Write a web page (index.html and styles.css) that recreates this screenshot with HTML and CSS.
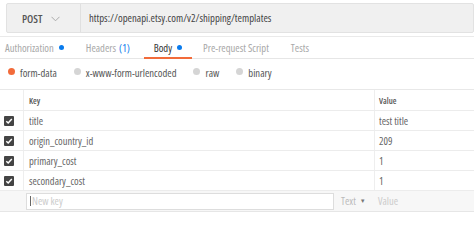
FILE: index.html
```html
<!DOCTYPE html>
<html>
<head>
<meta charset="utf-8">
<link rel="stylesheet" href="styles.css">
</head>
<body>
<div class="page">
  <div class="urlbar">
    <div class="method">POST <svg class="chev" width="9" height="6" viewBox="0 0 9 6"><path d="M0.5 0.8 L4.5 4.8 L8.5 0.8" fill="none" stroke="#aaa" stroke-width="1"/></svg></div>
    <div class="url">https://openapi.etsy.com/v2/shipping/templates</div>
  </div>
  <div class="tabs">
    <div class="tab">Authorization <span class="dot"></span></div>
    <div class="tab">Headers <span class="count">(1)</span></div>
    <div class="tab active">Body <span class="dot"></span></div>
    <div class="tab">Pre-request Script</div>
    <div class="tab">Tests</div>
  </div>
  <div class="modes">
    <div class="mode"><span class="radio on"></span>form-data</div>
    <div class="mode"><span class="radio"></span>x-www-form-urlencoded</div>
    <div class="mode"><span class="radio"></span>raw</div>
    <div class="mode"><span class="radio"></span>binary</div>
  </div>
  <div class="table">
    <div class="row head">
      <div class="c0"></div>
      <div class="c1">Key</div>
      <div class="c2">Value</div>
    </div>
    <div class="row">
      <div class="c0"><span class="cb"><svg width="8" height="8" viewBox="0 0 8 8"><path d="M1.3 4.2 L3.2 6 L6.8 2" fill="none" stroke="#fff" stroke-width="1.5"/></svg></span></div>
      <div class="c1">title</div>
      <div class="c2">test title</div>
    </div>
    <div class="row">
      <div class="c0"><span class="cb"><svg width="8" height="8" viewBox="0 0 8 8"><path d="M1.3 4.2 L3.2 6 L6.8 2" fill="none" stroke="#fff" stroke-width="1.5"/></svg></span></div>
      <div class="c1">origin_country_id</div>
      <div class="c2">209</div>
    </div>
    <div class="row">
      <div class="c0"><span class="cb"><svg width="8" height="8" viewBox="0 0 8 8"><path d="M1.3 4.2 L3.2 6 L6.8 2" fill="none" stroke="#fff" stroke-width="1.5"/></svg></span></div>
      <div class="c1">primary_cost</div>
      <div class="c2">1</div>
    </div>
    <div class="row">
      <div class="c0"><span class="cb"><svg width="8" height="8" viewBox="0 0 8 8"><path d="M1.3 4.2 L3.2 6 L6.8 2" fill="none" stroke="#fff" stroke-width="1.5"/></svg></span></div>
      <div class="c1">secondary_cost</div>
      <div class="c2">1</div>
    </div>
    <div class="row new">
      <div class="c0"></div>
      <div class="c1 newcell"><div class="input"><span class="caret"></span>New key</div><div class="type">Text <span class="tri">▼</span></div></div>
      <div class="c2 ph">Value</div>
    </div>
  </div>
</div>
</body>
</html>
```
FILE: styles.css
```css
* { box-sizing: border-box; }
html, body { margin: 0; padding: 0; background: #fff; }
body { font-family: "Open Sans", "Liberation Sans", sans-serif; font-stretch: 85%; color: #666; width: 474px; height: 220px; overflow: hidden; }
.page { padding-top: 3px; }
.urlbar {
  display: flex; align-items: stretch; height: 30px;
  background: #f0f0f0; border: 1px solid #e2e2e2; border-radius: 2px;
  margin: 0 0 0 6px; width: 468px;
}
.method {
  width: 74px; display: flex; align-items: center; padding-left: 15px; gap: 9px;
  font-size: 11px; font-weight: 600; color: #555; border-right: 1px solid #e0e0e0;
}
.chev { margin-top: 1px; }
.url { display: flex; align-items: center; padding-left: 8px; font-size: 10.7px; color: #444; }
.tabs {
  display: flex; height: 23px; margin-top: 3px; border-top: 1px solid #eaeaea; border-bottom: 1px solid #e6e6e6;
  padding-left: 5px; gap: 0;
}
.tab { display: flex; align-items: center; font-size: 10.6px; color: #a8a8a8; padding-right: 22px; position: relative; height: 100%; }
.tab .dot { display: inline-block; width: 5px; height: 5px; border-radius: 50%; background: #097bed; margin-left: 5px; }
.tab .count { color: #097bed; margin-left: 3px; }
.tab.active { color: #333; margin-left: -8px; padding-left: 10px; padding-right: 10px; margin-right: 11px; }
.tab.active::after { content: ""; position: absolute; left: 0; right: 0; bottom: -1px; height: 2px; background: #f26b3a; }
.modes { display: flex; height: 28px; align-items: center; padding-left: 8px; }
.mode { display: flex; align-items: center; font-size: 10.6px; color: #555; margin-right: 17px; }
.radio { width: 7px; height: 7px; border-radius: 50%; background: #d5d5d5; margin-right: 5px; margin-top: -3px; }
.radio.on { background: #f26b3a; }
.table { margin-top: 2px; border-top: 1px solid #e8e8e8; }
.row { display: grid; grid-template-columns: 23px 351px 100px; height: 20px; border-bottom: 1px solid #ececec; }
.row > div { display: flex; align-items: center; font-size: 10.5px; }
.row .c1 { border-left: 1px solid #eee; padding-left: 5px; }
.row .c2 { border-left: 1px solid #eee; padding-left: 4px; }
.row.head { height: 21px; }
.row.head > div { font-size: 8.5px; font-weight: 600; color: #555; }
.c0 { justify-content: center; }
.cb { width: 10px; height: 10px; background: #444; border-radius: 1px; display: flex; align-items: center; justify-content: center; margin-left: -5px; }
.row.new { background: #f7f7f7; height: 21px; border-bottom: 1px solid #e6e6e6; }
.row.new .c1 { border-left: none; padding: 0; gap: 0; }
.row.new .c2 { border-left: none; }
.newcell { display: flex; }
.input { width: 308px; height: 17px; margin-left: 3px; background: #fff; border: 1px solid #ddd; display: flex; align-items: center; padding-left: 3px; color: #ccc; font-size: 10.5px; }
.caret { width: 1px; height: 10px; background: #666; margin-right: 1px; }
.type { padding-left: 7px; color: #bbb; font-size: 10.5px; display: flex; align-items: center; }
.tri { font-size: 6px; color: #777; margin-left: 4px; }
.ph { color: #ccc; }
```
